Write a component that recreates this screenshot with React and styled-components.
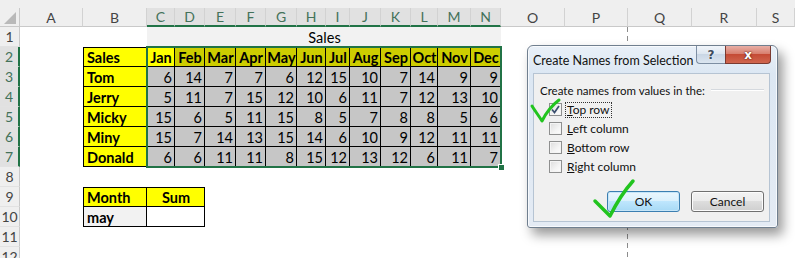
import React from 'react'
import styled, { createGlobalStyle, css } from 'styled-components'

const GlobalStyle = createGlobalStyle`
  html, body { margin: 0; padding: 0; background: #fff; }
  body { font-family: Lato, "Liberation Sans", sans-serif; overflow: hidden; }
`

const COLS = ['A', 'B', 'C', 'D', 'E', 'F', 'G', 'H', 'I', 'J', 'K', 'L', 'M', 'N', 'O', 'P', 'Q', 'R', 'S']
const WIDTHS = [63, 64, 28, 30, 31, 30, 31, 29, 24, 31, 30, 27, 33, 30, 64, 63, 64, 65]
const MONTHS = ['Jan', 'Feb', 'Mar', 'Apr', 'May', 'Jun', 'Jul', 'Aug', 'Sep', 'Oct', 'Nov', 'Dec']
const PEOPLE = [
  ['Tom', [6, 14, 7, 7, 6, 12, 15, 10, 7, 14, 9, 9]],
  ['Jerry', [5, 11, 7, 15, 12, 10, 6, 11, 7, 12, 13, 10]],
  ['Micky', [15, 6, 5, 11, 15, 8, 5, 7, 8, 8, 5, 6]],
  ['Miny', [15, 7, 14, 13, 15, 14, 6, 10, 9, 12, 11, 11]],
  ['Donald', [6, 6, 11, 11, 8, 15, 12, 13, 12, 6, 11, 7]],
]
const GREEN = '#217346'
const YELLOW = '#ffff00'
const YELLOW_SEL = '#cdcd00'
const GRAY_SEL = '#c6c6c6'

const Page = styled.div`
  position: relative;
  width: 795px;
  height: 258px;
  overflow: hidden;
  background: #fff;
`

const TopStrip = styled.div`
  height: 8px;
  background: #efefef;
`

const Sheet = styled.div`
  display: grid;
  grid-template-columns: 20px ${WIDTHS.map((w) => w + 'px').join(' ')} 1fr;
  grid-template-rows: 19px repeat(12, 20px);
`

const Corner = styled.div`
  grid-row: 1;
  grid-column: 1;
  background: #efefef;
  border-right: 1px solid #c9c9c9;
  border-bottom: 1px solid #c9c9c9;
  box-sizing: border-box;
  display: flex;
  align-items: flex-end;
  justify-content: flex-end;
  padding: 0 3px 2px 0;
  &::after {
    content: '';
    width: 0;
    height: 0;
    border-left: 12px solid transparent;
    border-bottom: 12px solid #b9b9b9;
  }
`

const ColHead = styled.div`
  grid-row: 1;
  grid-column: ${(p) => p.$col + 2};
  display: flex;
  align-items: center;
  justify-content: center;
  font-size: 14px;
  box-sizing: border-box;
  border-right: 1px solid #d2d2d2;
  ${(p) =>
    p.$sel
      ? css`
          background: #e1e1e1;
          color: #44725a;
          border-bottom: 2px solid ${GREEN};
        `
      : css`
          background: #efefef;
          color: #444;
          border-bottom: 1px solid #c9c9c9;
        `}
`

const RowHead = styled.div`
  grid-row: ${(p) => p.$row + 1};
  grid-column: 1;
  display: flex;
  align-items: center;
  justify-content: center;
  font-size: 14px;
  box-sizing: border-box;
  border-bottom: 1px solid #e2e2e2;
  ${(p) =>
    p.$sel
      ? css`
          background: #e1e1e1;
          color: #44725a;
          border-right: 2px solid ${GREEN};
        `
      : css`
          background: #efefef;
          color: #444;
          border-right: 1px solid #c9c9c9;
        `}
`

const Cell = styled.div`
  grid-row: ${(p) => p.$row + 1};
  grid-column: ${(p) => p.$col + 2} / span ${(p) => p.$span || 1};
  display: flex;
  align-items: center;
  justify-content: ${(p) => (p.$align === 'right' ? 'flex-end' : p.$align === 'center' ? 'center' : 'flex-start')};
  padding: 1px 2px 0 3px;
  box-sizing: border-box;
  font-size: 14.5px;
  color: #000;
  white-space: nowrap;
  font-weight: ${(p) => (p.$bold ? 700 : 400)};
  background: ${(p) => p.$fill || 'transparent'};
  ${(p) =>
    p.$boxed &&
    css`
      border-right: 1px solid #000;
      border-bottom: 1px solid #000;
    `}
  ${(p) => p.$top && css`border-top: 1px solid #000;`}
  ${(p) => p.$left && css`border-left: 1px solid #000;`}
`

const Selection = styled.div`
  grid-row: 3 / 9;
  grid-column: 4 / 16;
  margin: -1px;
  border: 2px solid ${GREEN};
  position: relative;
  z-index: 2;
  pointer-events: none;
`

const FillHandle = styled.div`
  position: absolute;
  right: -5px;
  bottom: -5px;
  width: 5px;
  height: 5px;
  background: ${GREEN};
  border: 1px solid #fff;
`

const PageBreak = styled.div`
  grid-row: 2 / 14;
  grid-column: 18;
  justify-self: start;
  width: 1px;
  margin-left: -1px;
  background: repeating-linear-gradient(to bottom, #8c8c8c 0 5px, transparent 5px 9px);
`

/* dialog */

const Dialog = styled.div`
  position: absolute;
  left: 527px;
  top: 45px;
  width: 251px;
  height: 183px;
  box-sizing: border-box;
  display: flex;
  flex-direction: column;
  border: 1px solid #707f8f;
  border-radius: 6px 6px 3px 3px;
  background: linear-gradient(to bottom, #e9f0f8 0, #dce7f3 28px, #e4ebf4 100%);
  box-shadow: 5px 7px 12px rgba(0, 0, 0, 0.4), inset 0 0 0 1px rgba(255, 255, 255, 0.7);
  font-family: Lato, "Open Sans", sans-serif;
  z-index: 5;
`

const TitleBar = styled.div`
  height: 27px;
  display: flex;
  justify-content: space-between;
  align-items: flex-start;
  padding: 0 6px 0 5px;
`

const Title = styled.div`
  font-size: 12.5px;
  color: #111;
  padding-top: 7px;
  white-space: nowrap;
`

const Caption = styled.div`
  display: flex;
`

const CapButton = styled.div`
  height: 18px;
  box-sizing: border-box;
  display: flex;
  align-items: center;
  justify-content: center;
  font-weight: 700;
  font-family: "DejaVu Sans", sans-serif;
  ${(p) =>
    p.$close
      ? css`
          width: 46px;
          border: 1px solid #7a3a31;
          border-top: none;
          border-radius: 0 0 4px 0;
          background: linear-gradient(to bottom, #e8aea5 0, #d8806f 45%, #c54b35 50%, #d0664f 100%);
          color: #fff;
          font-size: 12px;
          text-shadow: 0 0 2px #5b1e14, 0 0 1px #5b1e14;
        `
      : css`
          width: 29px;
          border: 1px solid #7d8ea3;
          border-top: none;
          border-right: none;
          border-radius: 0 0 0 4px;
          background: linear-gradient(to bottom, #f1f5fa 0, #dde6f0 45%, #c9d6e5 50%, #dbe5f0 100%);
          color: #3d4b5c;
          font-size: 12px;
          text-shadow: 0 0 2px #fff;
        `}
`

const Panel = styled.div`
  flex: 1;
  margin: 0 7px 5px 5px;
  background: #f0f0f0;
  border: 1px solid #b6c4d3;
  display: flex;
  flex-direction: column;
  padding: 8px 0 9px 0;
  font-size: 11.5px;
  color: #111;
`

const GroupHead = styled.div`
  display: flex;
  align-items: center;
  padding-left: 6px;
  padding-right: 5px;
  height: 16px;
  white-space: nowrap;
  &::after {
    content: '';
    flex: 1;
    height: 1px;
    margin-left: 6px;
    background: #d5d9de;
    border-bottom: 1px solid #fff;
  }
`

const Options = styled.div`
  display: flex;
  flex-direction: column;
  padding: 2px 0 0 15px;
`

const Option = styled.label`
  height: 19px;
  display: flex;
  align-items: center;
  gap: 3px;
`

const Box = styled.span`
  width: 13px;
  height: 13px;
  box-sizing: border-box;
  border: 1px solid #8e8f8f;
  background: linear-gradient(135deg, #dcdcdc 0, #f4f4f4 60%, #fdfdfd 100%);
  box-shadow: inset 0 0 0 1px #f4f4f4;
  display: flex;
  align-items: center;
  justify-content: center;
`

const OptionText = styled.span`
  padding: 0 1px;
  line-height: 14px;
  font-size: 12px;
  border: 1px dotted ${(p) => (p.$focus ? '#333' : 'transparent')};
`

const Buttons = styled.div`
  margin-top: auto;
  display: flex;
  justify-content: flex-end;
  gap: 11px;
  padding-right: 5px;
`

const Button = styled.div`
  width: 73px;
  height: 21px;
  box-sizing: border-box;
  border-radius: 3px;
  display: flex;
  align-items: center;
  justify-content: center;
  font-size: 12px;
  color: #111;
  ${(p) =>
    p.$default
      ? css`
          border: 1px solid #3c7fb1;
          background: linear-gradient(to bottom, #eaf6fd 0, #d9f0fc 50%, #bee6fd 50%, #a7d9f5 100%);
          box-shadow: inset 0 0 0 1px #c7e6f8;
        `
      : css`
          border: 1px solid #707070;
          background: linear-gradient(to bottom, #f2f2f2 0, #ebebeb 50%, #dddddd 50%, #cfcfcf 100%);
          box-shadow: inset 0 0 0 1px #fcfcfc;
        `}
`

const Marks = styled.svg`
  position: absolute;
  left: 0;
  top: 0;
  z-index: 8;
  pointer-events: none;
`

function Checkbox({ checked }) {
  return (
    <Box>
      {checked && (
        <svg width="9" height="9" viewBox="0 0 9 9">
          <path d="M1 4.5 L3.5 7.5 L8 1" fill="none" stroke="#3b4f6e" strokeWidth="1.7" />
        </svg>
      )}
    </Box>
  )
}

export default function App() {
  const cells = []

  cells.push(
    <Cell key="title" $row={1} $col={2} $span={12} $align="center" $fill="#f2f2f2">
      Sales
    </Cell>
  )
  cells.push(
    <Cell key="b2" $row={2} $col={1} $bold $fill={YELLOW} $boxed $top $left>
      Sales
    </Cell>
  )
  MONTHS.forEach((m, i) => {
    cells.push(
      <Cell key={m} $row={2} $col={i + 2} $bold $align="center" $fill={i === 0 ? YELLOW : YELLOW_SEL} $boxed $top>
        {m}
      </Cell>
    )
  })
  PEOPLE.forEach(([name, vals], r) => {
    cells.push(
      <Cell key={name} $row={r + 3} $col={1} $bold $fill={YELLOW} $boxed $left>
        {name}
      </Cell>
    )
    vals.forEach((v, i) => {
      cells.push(
        <Cell key={name + i} $row={r + 3} $col={i + 2} $align="right" $fill={GRAY_SEL} $boxed>
          {v}
        </Cell>
      )
    })
  })
  cells.push(
    <Cell key="month" $row={9} $col={1} $bold $fill={YELLOW} $boxed $top $left>
      Month
    </Cell>,
    <Cell key="sum" $row={9} $col={2} $span={2} $bold $align="center" $fill={YELLOW} $boxed $top>
      Sum
    </Cell>,
    <Cell key="may" $row={10} $col={1} $bold $fill="#f2f2f2" $boxed $left>
      may
    </Cell>,
    <Cell key="sumv" $row={10} $col={2} $span={2} $fill="#fff" $boxed />
  )

  return (
    <Page>
      <GlobalStyle />
      <TopStrip />
      <Sheet>
        <Corner />
        {COLS.map((c, i) => (
          <ColHead key={c} $col={i} $sel={i >= 2 && i <= 13}>
            {c}
          </ColHead>
        ))}
        {Array.from({ length: 12 }, (_, i) => (
          <RowHead key={i} $row={i + 1} $sel={i + 1 >= 2 && i + 1 <= 7}>
            {i + 1}
          </RowHead>
        ))}
        {cells}
        <Selection>
          <FillHandle />
        </Selection>
        <PageBreak />
      </Sheet>

      <Dialog>
        <TitleBar>
          <Title>Create Names from Selection</Title>
          <Caption>
            <CapButton>?</CapButton>
            <CapButton $close>x</CapButton>
          </Caption>
        </TitleBar>
        <Panel>
          <GroupHead>Create names from values in the:</GroupHead>
          <Options>
            <Option>
              <Checkbox checked />
              <OptionText $focus>
                <u>T</u>op row
              </OptionText>
            </Option>
            <Option>
              <Checkbox />
              <OptionText>
                <u>L</u>eft column
              </OptionText>
            </Option>
            <Option>
              <Checkbox />
              <OptionText>
                <u>B</u>ottom row
              </OptionText>
            </Option>
            <Option>
              <Checkbox />
              <OptionText>
                <u>R</u>ight column
              </OptionText>
            </Option>
          </Options>
          <Buttons>
            <Button $default>OK</Button>
            <Button>Cancel</Button>
          </Buttons>
        </Panel>
      </Dialog>

      <Marks width="795" height="258" viewBox="0 0 795 258">
        <path
          d="M532 106 C535 111 539 116 542 121 C546 113 551 106 559 100"
          fill="none"
          stroke="#22c41f"
          strokeWidth="3"
          strokeLinecap="round"
          strokeLinejoin="round"
        />
        <path
          d="M595 201 C600 206 605 211 610 216 C616 204 624 191 633 181"
          fill="none"
          stroke="#22c41f"
          strokeWidth="3.5"
          strokeLinecap="round"
          strokeLinejoin="round"
        />
      </Marks>
    </Page>
  )
}
